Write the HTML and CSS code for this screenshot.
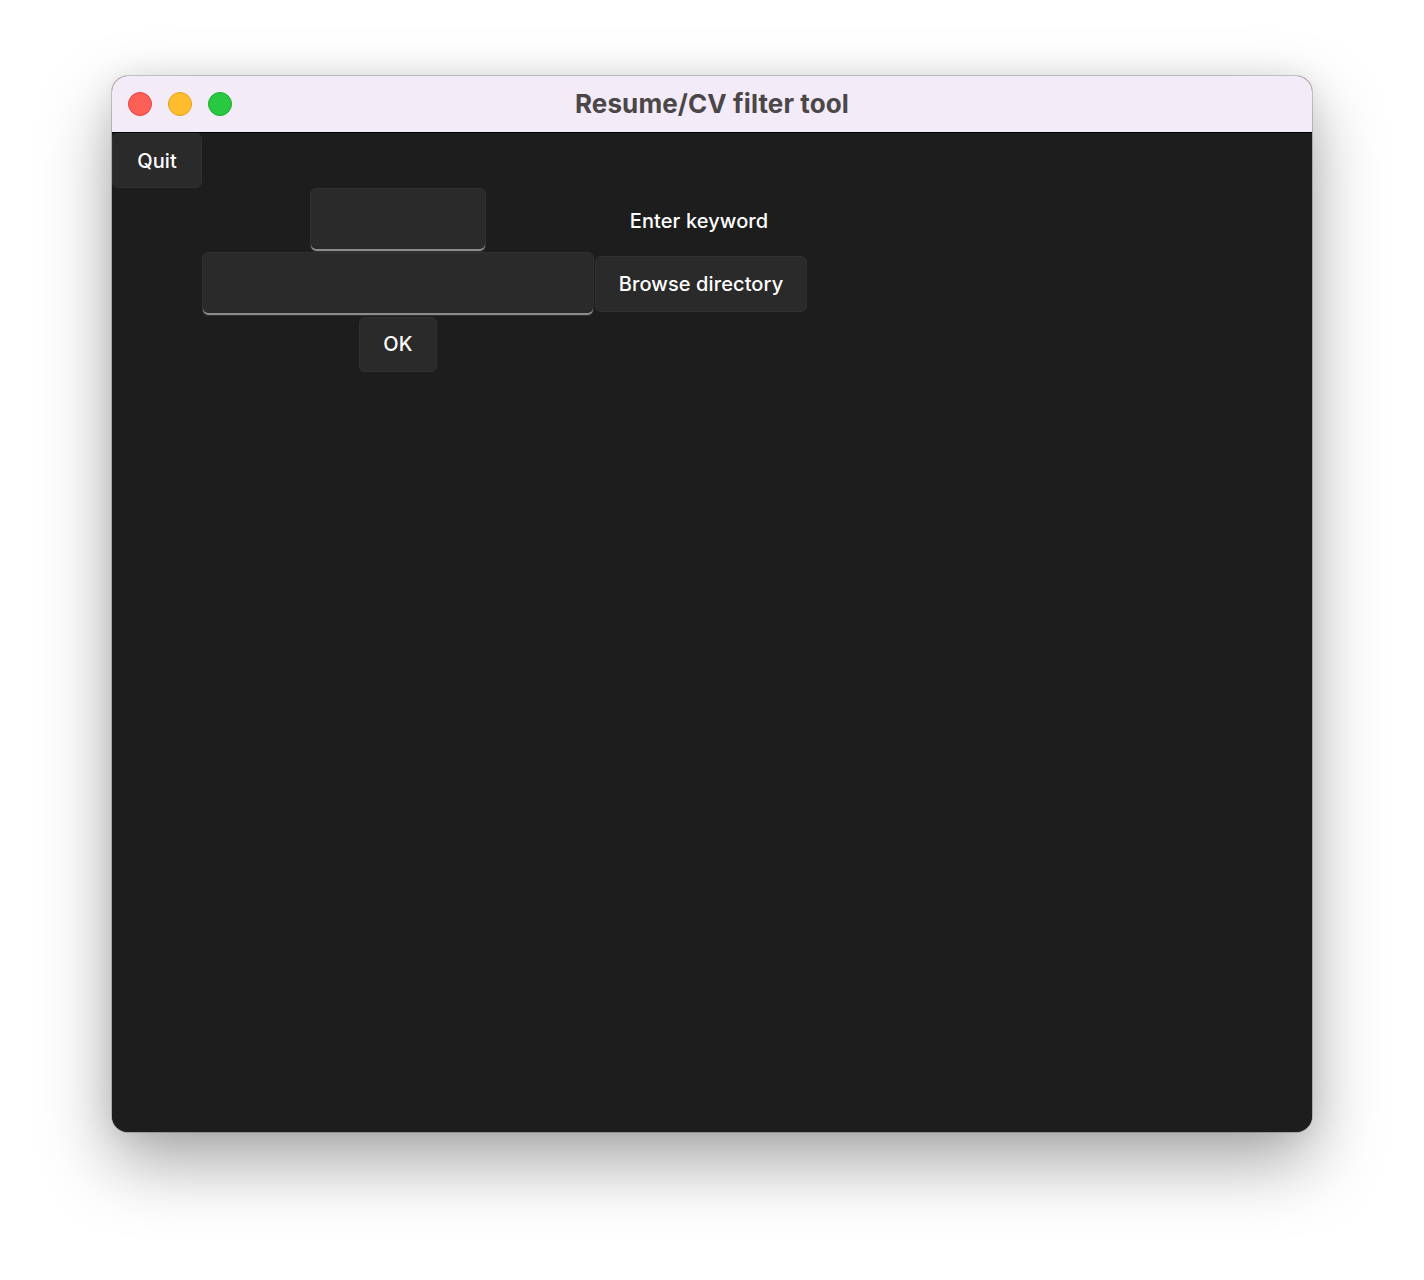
FILE: index.html
```html
<!DOCTYPE html>
<html>
<head>
<meta charset="utf-8">
<title>Resume/CV filter tool</title>
<link rel="stylesheet" href="styles.css">
</head>
<body>
<div class="window">
  <div class="titlebar">
    <div class="lights">
      <span class="light red"></span>
      <span class="light yellow"></span>
      <span class="light green"></span>
    </div>
    <div class="title">Resume/CV filter tool</div>
  </div>
  <div class="content">
    <div class="grid">
      <div class="cell c0 r0"><button class="btn quit">Quit</button></div>
      <div class="cell c1 r1"><div class="entry entry-small"></div></div>
      <div class="cell c2 r1"><span class="label">Enter keyword</span></div>
      <div class="cell c1 r2"><div class="entry entry-wide"></div></div>
      <div class="cell c2 r2"><button class="btn browse">Browse directory</button></div>
      <div class="cell c1 r3"><button class="btn ok">OK</button></div>
    </div>
  </div>
</div>
</body>
</html>
```

FILE: styles.css
```css
html, body {
  margin: 0;
  padding: 0;
  background: #ffffff;
}
body {
  width: 1424px;
  height: 1280px;
  font-family: Inter, "Noto Sans", "Liberation Sans", sans-serif;
  padding-top: 76px;
  padding-left: 112px;
  box-sizing: border-box;
}
.window {
  width: 1200px;
  height: 1056px;
  border-radius: 16px;
  overflow: hidden;
  display: flex;
  flex-direction: column;
  box-shadow: 0 0 0 1px rgba(0,0,0,0.18), 0 30px 70px rgba(0,0,0,0.35), 0 0 30px rgba(0,0,0,0.08);
  background: #1d1d1d;
}
.titlebar {
  height: 56px;
  flex: 0 0 56px;
  background: #f3ebf8;
  border-bottom: 1px solid #000;
  display: flex;
  align-items: center;
  justify-content: center;
  position: relative;
}
.lights {
  position: absolute;
  left: 16px;
  top: 16px;
  display: flex;
  gap: 16px;
}
.light {
  width: 24px;
  height: 24px;
  border-radius: 50%;
  box-sizing: border-box;
}
.red { background: #fe5f57; border: 1px solid #e2463f; }
.yellow { background: #febc2e; border: 1px solid #e1a116; }
.green { background: #28c840; border: 1px solid #14ae2b; }
.title {
  font-size: 26px;
  font-weight: 700;
  color: #4b4648;
  letter-spacing: 0.1px;
  margin-top: -1px;
}
.content {
  flex: 1;
  background: #1d1d1d;
}
.grid {
  display: grid;
  grid-template-columns: 90px 392px 214px;
  grid-template-rows: 55px 64px 64px 56px;
}
.cell {
  display: flex;
  align-items: center;
  justify-content: center;
}
.c0 { grid-column: 1; }
.c1 { grid-column: 2; }
.c2 { grid-column: 3; }
.r0 { grid-row: 1; }
.r1 { grid-row: 2; }
.r2 { grid-row: 3; }
.r3 { grid-row: 4; }
.btn {
  background: #2a2a2a;
  border: 1px solid #303030;
  border-radius: 6px;
  color: #ffffff;
  font-family: Inter, "Noto Sans", "Liberation Sans", sans-serif;
  font-size: 20px;
  font-weight: 500;
  letter-spacing: 0.1px;
  padding: 0;
  box-sizing: border-box;
}
.quit { width: 90px; height: 55px; }
.browse { width: 212px; height: 56px; }
.ok { width: 78px; height: 55px; }
.label {
  color: #ffffff;
  font-size: 20px;
  font-weight: 500;
  letter-spacing: 0.1px;
  margin-top: 1px;
  margin-right: 4px;
}
.entry {
  background: #2a2a2a;
  border: 1px solid #303030;
  border-radius: 6px;
  box-sizing: border-box;
  box-shadow: inset 0 -2px 0 #8c8c8c;
}
.entry-small { width: 176px; height: 64px; }
.entry-wide { width: 392px; height: 64px; }
```
